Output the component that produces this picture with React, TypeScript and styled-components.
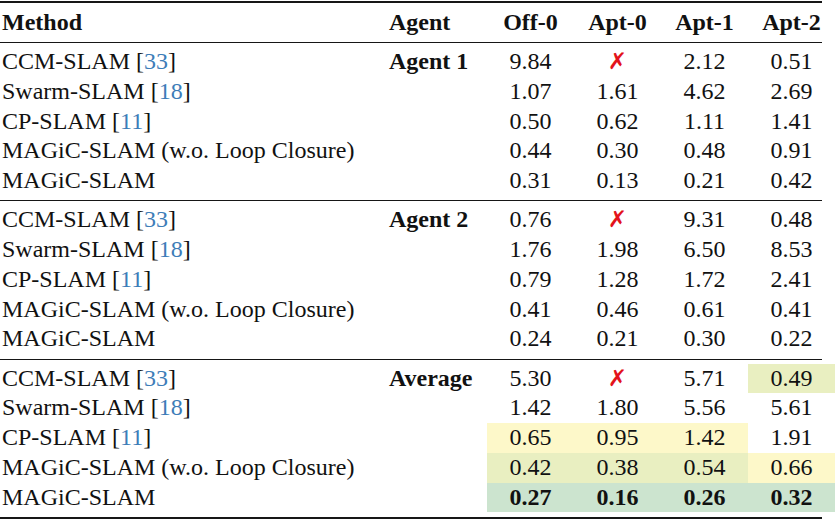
import React from "react";
import styled, { createGlobalStyle } from "styled-components";

const GlobalStyle = createGlobalStyle`
  html, body {
    margin: 0;
    padding: 0;
    background: #ffffff;
  }
  body {
    font-family: "Liberation Serif", "Times New Roman", serif;
    color: #111111;
  }
`;

type Tone = "none" | "yellow" | "lime" | "green";

const toneColors: Record<Tone, string> = {
  none: "transparent",
  yellow: "#fdf8c9",
  lime: "#e9efc1",
  green: "#cce4cf",
};

const Table = styled.div`
  width: 839px;
  padding-top: 1px;
  display: flex;
  flex-direction: column;
`;

const Rule = styled.div<{ $thick?: boolean }>`
  width: 822px;
  height: ${(p) => (p.$thick ? "2px" : "1px")};
  background: #161616;
`;

const HeaderRow = styled.div`
  display: grid;
  grid-template-columns: 389px 98px repeat(4, 87px);
  height: 39px;
  align-items: center;
  font-size: 24px;
  font-weight: bold;
`;

const Group = styled.div`
  display: flex;
  flex-direction: column;
  padding: 4px 0 4.5px;
`;

const Row = styled.div`
  display: grid;
  grid-template-columns: 389px 98px repeat(4, 87px);
  height: 29.75px;
  font-size: 24px;
  line-height: 29.75px;
`;

const MethodCell = styled.div`
  padding-left: 2px;
  white-space: nowrap;
`;

const AgentCell = styled.div`
  font-weight: bold;
  white-space: nowrap;
`;

const ValueCell = styled.div<{ $tone: Tone; $bold?: boolean }>`
  text-align: center;
  background: ${(p) => toneColors[p.$tone]};
  font-weight: ${(p) => (p.$bold ? "bold" : "normal")};
`;

const HeadValue = styled.div`
  text-align: center;
`;

const Cite = styled.span`
  color: #3d7db8;
`;

const Fail = styled.span`
  color: #e3131b;
  font-family: "DejaVu Sans", sans-serif;
  font-size: 23px;
  font-weight: bold;
`;

type Cell = { v: string | null; tone?: Tone; bold?: boolean };

type Entry = { name: string; cite?: string; cells: Cell[] };

const c = (v: string | null, tone: Tone = "none", bold = false): Cell => ({
  v,
  tone,
  bold,
});

const groups: { agent: string; rows: Entry[] }[] = [
  {
    agent: "Agent 1",
    rows: [
      { name: "CCM-SLAM", cite: "33", cells: [c("9.84"), c(null), c("2.12"), c("0.51")] },
      { name: "Swarm-SLAM", cite: "18", cells: [c("1.07"), c("1.61"), c("4.62"), c("2.69")] },
      { name: "CP-SLAM", cite: "11", cells: [c("0.50"), c("0.62"), c("1.11"), c("1.41")] },
      { name: "MAGiC-SLAM (w.o. Loop Closure)", cells: [c("0.44"), c("0.30"), c("0.48"), c("0.91")] },
      { name: "MAGiC-SLAM", cells: [c("0.31"), c("0.13"), c("0.21"), c("0.42")] },
    ],
  },
  {
    agent: "Agent 2",
    rows: [
      { name: "CCM-SLAM", cite: "33", cells: [c("0.76"), c(null), c("9.31"), c("0.48")] },
      { name: "Swarm-SLAM", cite: "18", cells: [c("1.76"), c("1.98"), c("6.50"), c("8.53")] },
      { name: "CP-SLAM", cite: "11", cells: [c("0.79"), c("1.28"), c("1.72"), c("2.41")] },
      { name: "MAGiC-SLAM (w.o. Loop Closure)", cells: [c("0.41"), c("0.46"), c("0.61"), c("0.41")] },
      { name: "MAGiC-SLAM", cells: [c("0.24"), c("0.21"), c("0.30"), c("0.22")] },
    ],
  },
  {
    agent: "Average",
    rows: [
      { name: "CCM-SLAM", cite: "33", cells: [c("5.30"), c(null), c("5.71"), c("0.49", "lime")] },
      { name: "Swarm-SLAM", cite: "18", cells: [c("1.42"), c("1.80"), c("5.56"), c("5.61")] },
      {
        name: "CP-SLAM",
        cite: "11",
        cells: [c("0.65", "yellow"), c("0.95", "yellow"), c("1.42", "yellow"), c("1.91")],
      },
      {
        name: "MAGiC-SLAM (w.o. Loop Closure)",
        cells: [c("0.42", "lime"), c("0.38", "lime"), c("0.54", "lime"), c("0.66", "yellow")],
      },
      {
        name: "MAGiC-SLAM",
        cells: [
          c("0.27", "green", true),
          c("0.16", "green", true),
          c("0.26", "green", true),
          c("0.32", "green", true),
        ],
      },
    ],
  },
];

const columns = ["Off-0", "Apt-0", "Apt-1", "Apt-2"];

export default function App() {
  return (
    <>
      <GlobalStyle />
      <Table>
        <Rule $thick />
        <HeaderRow>
          <MethodCell>Method</MethodCell>
          <div>Agent</div>
          {columns.map((col) => (
            <HeadValue key={col}>{col}</HeadValue>
          ))}
        </HeaderRow>
        {groups.map((group, gi) => (
          <React.Fragment key={group.agent}>
            <Rule $thick={false} />
            <Group>
              {group.rows.map((row, ri) => (
                <Row key={row.name + ri}>
                  <MethodCell>
                    {row.name}
                    {row.cite && (
                      <>
                        {" ["}
                        <Cite>{row.cite}</Cite>
                        {"]"}
                      </>
                    )}
                  </MethodCell>
                  <AgentCell>{ri === 0 ? group.agent : ""}</AgentCell>
                  {row.cells.map((cell, ci) => (
                    <ValueCell key={ci} $tone={cell.tone ?? "none"} $bold={cell.bold}>
                      {cell.v === null ? <Fail>✗</Fail> : cell.v}
                    </ValueCell>
                  ))}
                </Row>
              ))}
            </Group>
            {gi === groups.length - 1 && <Rule $thick />}
          </React.Fragment>
        ))}
      </Table>
    </>
  );
}
